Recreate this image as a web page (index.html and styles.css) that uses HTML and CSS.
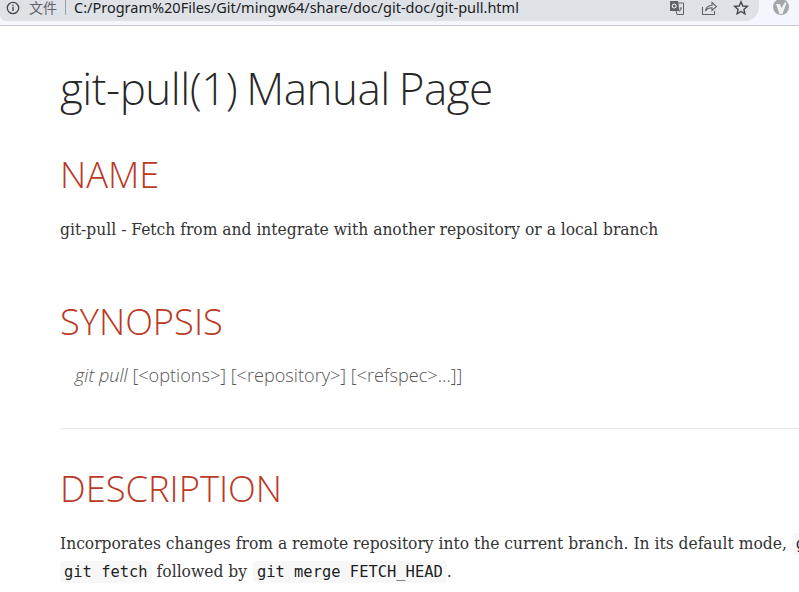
FILE: index.html
```html
<!DOCTYPE html>
<html lang="en">
<head>
<meta charset="utf-8">
<title>git-pull(1) Manual Page</title>
<link rel="stylesheet" href="styles.css">
</head>
<body>
<header class="toolbar">
  <div class="omnibox">
    <svg class="info" width="14" height="14" viewBox="0 0 14 14"><circle cx="7" cy="7" r="5.700" fill="none" stroke="#45484d" stroke-width="1.300"/><rect x="6.300" y="6" width="1.400" height="4" fill="#45484d"/><rect x="6.300" y="3.800" width="1.400" height="1.400" fill="#45484d"/></svg>
    <span class="scheme">文件</span>
    <span class="sep"></span>
    <span class="url">C:/Program%20Files/Git/mingw64/share/doc/git-doc/git-pull.html</span>
    <span class="actions">
      <svg width="16" height="16" viewBox="0 0 16 16"><path d="M5 3h9.500v11.500H8z" fill="none" stroke="#5f6368"/><path d="M1 1h8l1.500 10H1z" fill="#5f6368"/><circle cx="5.200" cy="6" r="2" fill="none" stroke="#fff"/><path d="M11 8h2M12 8c0 2-1 3-2 3.500" fill="none" stroke="#5f6368"/></svg>
      <svg width="16" height="16" viewBox="0 0 16 16"><path d="M1.500 7v7.500h12V11" fill="none" stroke="#5f6368" stroke-width="1.100"/><path d="M4.500 11c.5-3.500 3-5.500 6.500-5.500V2.500l4.500 4-4.500 4V7.800C8.500 7.800 6 8.800 4.500 11z" fill="none" stroke="#5f6368" stroke-width="1.100"/></svg>
      <svg width="16" height="16" viewBox="0 0 16 16"><path d="M8 1.800l1.800 4.200 4.500.4-3.400 3 1 4.500L8 11.500l-3.900 2.400 1-4.500-3.400-3 4.500-.4z" fill="none" stroke="#45484d" stroke-width="1.400"/></svg>
    </span>
  </div>
  <div class="tail">
    <svg width="16" height="16" viewBox="0 0 16 16"><circle cx="8" cy="8" r="8" fill="#a4a6a8"/><path d="M3 5h4l1.500 4L12 3l1.500 1L9.500 15H6.500z" fill="#eef0f1"/></svg>
  </div>
</header>
<main class="page">
  <h1 class="title">git-pull(1) Manual Page</h1>
  <section class="sect sect-name">
    <h2 class="heading">NAME</h2>
    <p class="text">git-pull - Fetch from and integrate with another repository or a local branch</p>
  </section>
  <section class="sect sect-synopsis">
    <h2 class="heading">SYNOPSIS</h2>
    <p class="verse"><em>git pull</em> [&lt;options&gt;] [&lt;repository&gt;] [&lt;refspec&gt;…]]</p>
  </section>
  <section class="sect sect-desc">
    <h2 class="heading">DESCRIPTION</h2>
    <p class="text">Incorporates changes from a remote repository into the current branch. In its default mode, <code class="code">git pull</code></p>
    <p class="text"><code class="code">git fetch</code> followed by <code class="code">git merge FETCH_HEAD</code>.</p>
  </section>
</main>
</body>
</html>
```
FILE: styles.css
```css
html, body {
  margin: 0;
  padding: 0;
  height: 592px;
  overflow: hidden;
  background: #fff;
}
.toolbar {
  display: flex;
  height: 25px;
  background: #f3f6fc;
  border-bottom: 1px solid #c4c6cc;
  overflow: hidden;
}
.omnibox {
  flex: 0 0 759px;
  box-sizing: border-box;
  display: flex;
  align-items: center;
  height: 21px;
  padding: 0 0 6px 6px;
  background: #dee1e6;
  border-radius: 0 0 14px 6px;
  font: 14.500px/15px "Noto Sans", "Noto Sans CJK SC", sans-serif;
  color: #202124;
}
.info { flex: none; }
.scheme {
  margin-left: 9px;
  font-size: 14px;
  color: #5f6368;
}
.sep {
  width: 1px;
  height: 15px;
  margin: 0 8px 0 8px;
  background: #9aa0a6;
}
.url { white-space: nowrap; }
.actions {
  display: flex;
  gap: 16px;
  margin-left: auto;
  margin-right: 10px;
}
.tail {
  padding: 0 0 0 14px;
  margin-top: -1px;
}
.page {
  padding: 0 0 0 60px;
  width: 1100px;
  box-sizing: border-box;
  color: #333;
}
.title {
  margin: 31px 0 0;
  font: 300 44px/62px "Open Sans", sans-serif;
  letter-spacing: -0.500px;
  word-spacing: -2px;
  color: rgba(0,0,0,.85);
}
.heading {
  margin: 0;
  font: 300 36.300px/46px "Open Sans", sans-serif;
  color: #ba3925;
}
.sect-name { margin-top: 32px; }
.sect-synopsis { margin-top: 55px; }
.sect-desc {
  margin-top: 39px;
  padding-top: 36px;
  border-top: 1px solid #e8e8e8;
  width: 739px;
}
.text {
  margin: 18px 0 0;
  font: 17.260px/28px "DejaVu Serif", serif;
  font-stretch: condensed;
  white-space: nowrap;
}
.sect-desc .text { margin-top: 0; }
.sect-desc .heading + .text { margin-top: 18px; }
.verse {
  margin: 17px 0 0 15px;
  font: 300 18.150px/28px "Open Sans", sans-serif;
  color: #555;
}
.code {
  font: 15.450px/20px "DejaVu Sans Mono", monospace;
  background: #f7f7f8;
  border-radius: 4px;
  padding: 2px 4px;
  color: rgba(0,0,0,.9);
}
.code + .code { margin-left: 1px; }
```
